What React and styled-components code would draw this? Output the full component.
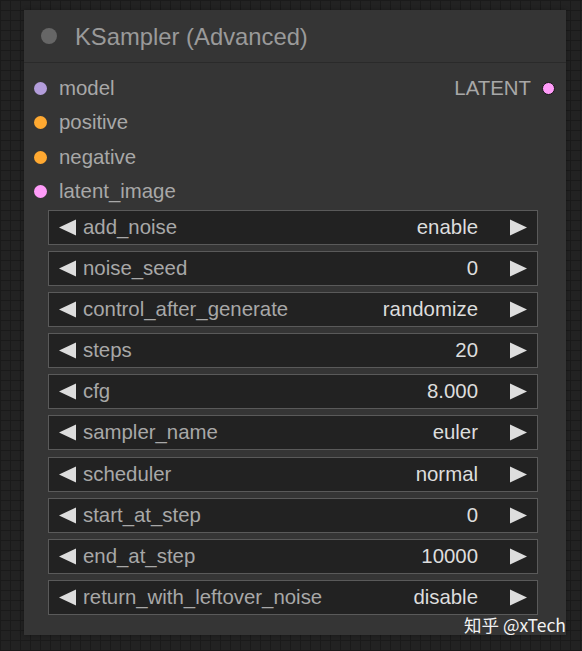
import React from 'react';
import styled, { createGlobalStyle } from 'styled-components';

const GlobalStyle = createGlobalStyle`
	html, body {
		margin: 0;
		padding: 0;
		background-color: #222222;
		background-image:
			linear-gradient(to right, #1a1a1a 1px, transparent 1px),
			linear-gradient(to bottom, #1a1a1a 1px, transparent 1px);
		background-size: 10px 10px;
		font-family: "Liberation Sans", Arial, sans-serif;
	}
`;

const Canvas = styled.div`
	position: relative;
	width: 582px;
	height: 651px;
	padding: 10px 0 0 24px;
	box-sizing: border-box;
`;

const Node = styled.div`
	width: 542px;
	height: 625px;
	background: #353535;
	display: flex;
	flex-direction: column;
	box-shadow: 0 0 4px rgba(0, 0, 0, 0.35);
`;

const TitleBar = styled.div`
	height: 53px;
	display: flex;
	align-items: center;
	gap: 18px;
	padding-left: 17px;
	background: #353535;
	border-bottom: 1px solid #2a2a2a;
	box-sizing: border-box;
`;

const TitleDot = styled.span`
	width: 16px;
	height: 16px;
	border-radius: 50%;
	background: #666;
`;

const Title = styled.span`
	font-size: 23.8px;
	color: #9a9a9a;
	margin-top: 1px;
`;

const Body = styled.div`
	display: flex;
	flex-direction: column;
	padding: 8px 28px 0 10px;
`;

const SlotRow = styled.div`
	height: 34.5px;
	display: flex;
	align-items: center;
	justify-content: space-between;
`;

const Slot = styled.div`
	display: flex;
	align-items: center;
	font-size: 20.4px;
	color: #a8a8a8;
	flex-direction: ${p => (p.$output ? 'row-reverse' : 'row')};
	margin-right: ${p => (p.$output ? '-17px' : '0')};
	gap: ${p => (p.$output ? '11px' : '12px')};
`;

const Dot = styled.span`
	width: 13px;
	height: 13px;
	border-radius: 50%;
	background: ${p => p.$color};
	box-sizing: border-box;
	border: ${p => (p.$ring ? '1.5px solid #151515' : 'none')};
`;

const Widgets = styled.div`
	display: flex;
	flex-direction: column;
	gap: 6.2px;
	padding-left: 14px;
	margin-top: 0.5px;
`;

const Widget = styled.div`
	height: 35px;
	box-sizing: border-box;
	border: 1px solid #5a5a5a;
	background: #222222;
	display: flex;
	align-items: center;
	padding: 0 10px;
	font-size: 20.4px;
`;

const Label = styled.span`
	color: #a8a8a8;
	margin-left: 7px;
	flex: 1;
`;

const Value = styled.span`
	color: #dddddd;
	margin-right: 32px;
`;

const Arrow = ({ dir }) => (
	<svg width="17" height="17" viewBox="0 0 17 17">
		{dir === 'left' ? (
			<polygon points="17,0.5 17,16.5 0,8.5" fill="#dddddd" />
		) : (
			<polygon points="0,0.5 0,16.5 17,8.5" fill="#dddddd" />
		)}
	</svg>
);

const Watermark = styled.span`
	position: absolute;
	right: 16px;
	top: 612px;
	font-family: "Noto Sans CJK SC", "DejaVu Sans", sans-serif;
	font-size: 17.5px;
	color: #f2f2f2;
`;

const inputs = [
	{ name: 'model', color: '#b39ddb' },
	{ name: 'positive', color: '#ffa931' },
	{ name: 'negative', color: '#ffa931' },
	{ name: 'latent_image', color: '#ff9cf9' },
];

const widgets = [
	['add_noise', 'enable'],
	['noise_seed', '0'],
	['control_after_generate', 'randomize'],
	['steps', '20'],
	['cfg', '8.000'],
	['sampler_name', 'euler'],
	['scheduler', 'normal'],
	['start_at_step', '0'],
	['end_at_step', '10000'],
	['return_with_leftover_noise', 'disable'],
];

const App = () => {
	return (
		<>
			<GlobalStyle />
			<Canvas>
				<Node>
					<TitleBar>
						<TitleDot />
						<Title>KSampler (Advanced)</Title>
					</TitleBar>
					<Body>
						{inputs.map((inp, i) => (
							<SlotRow key={inp.name}>
								<Slot>
									<Dot $color={inp.color} />
									{inp.name}
								</Slot>
								{i === 0 && (
									<Slot $output>
										<Dot $color="#ff9cf9" $ring />
										LATENT
									</Slot>
								)}
							</SlotRow>
						))}
						<Widgets>
							{widgets.map(([label, value]) => (
								<Widget key={label}>
									<Arrow dir="left" />
									<Label>{label}</Label>
									<Value>{value}</Value>
									<Arrow dir="right" />
								</Widget>
							))}
						</Widgets>
					</Body>
				</Node>
				<Watermark>知乎 @xTech</Watermark>
			</Canvas>
		</>
	);
};

export default App;
